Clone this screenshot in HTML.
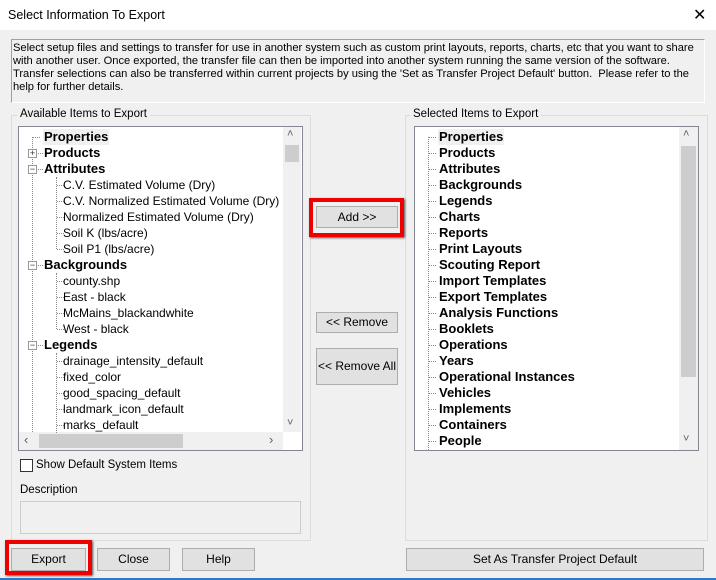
<!DOCTYPE html>
<html><head><style>
*{margin:0;padding:0;box-sizing:border-box}
body{width:716px;height:580px;background:#f0f0f0;font-family:"Liberation Sans",sans-serif;font-size:12px;color:#000;position:relative;overflow:hidden}
.a{position:absolute}
.btn{position:absolute;background:#e1e1e1;border:1px solid #adadad;text-align:center;font-size:12px}
.tree{position:absolute;background:#fff;border:1px solid #828790;overflow:hidden}
.it{position:absolute;white-space:nowrap;line-height:16px}
.b{font-weight:bold;font-size:13px}
.dh{position:absolute;border-top:1px dotted #888;width:7px;height:0}
.dv{position:absolute;border-left:1px dotted #888;width:0}
.pm{position:absolute;width:9px;height:9px;border:1px solid #999;background:#fff;font-size:9px;line-height:7px;text-align:center;color:#333}
.grp{position:absolute;border:1px solid #dcdcdc}
.sb{position:absolute;background:#f0f0f0}
</style></head><body>
<div class="a" style="left:0;top:0;width:716px;height:30px;background:#fff"></div>
<div class="a" style="left:8px;top:8px;font-size:12.5px">Select Information To Export</div>
<div class="a" style="left:693px;top:5px;font-size:16px">✕</div>
<div class="a" style="left:11px;top:39px;width:694px;height:64px;border:1px solid #a0a0a0;border-right-color:#fff;border-bottom-color:#fff;padding:2px 0 0 1px;font-size:11.15px;line-height:13px;letter-spacing:-0.02px">Select setup files and settings to transfer for use in another system such as custom print layouts, reports, charts, etc that you want to share with another user. Once exported, the transfer file can then be imported into another system running the same version of the software. Transfer selections can also be transferred within current projects by using the 'Set as Transfer Project Default' button.&nbsp; Please refer to the help for further details.</div>

<div class="grp" style="left:11px;top:115px;width:300px;height:426px"></div>
<div class="a" style="left:17px;top:108px;background:#f0f0f0;padding:0 3px;font-size:11.5px">Available Items to Export</div>
<div class="grp" style="left:405px;top:115px;width:303px;height:426px"></div>
<div class="a" style="left:410px;top:108px;background:#f0f0f0;padding:0 3px;font-size:11.5px">Selected Items to Export</div>

<div class="tree" style="left:18px;top:126px;width:285px;height:325px">
<div class="sb" style="left:264px;top:0;width:18px;height:305px"></div>
<div class="a" style="left:266px;top:18px;width:14px;height:17px;background:#cdcdcd"></div>
<div class="a" style="left:268px;top:1px;font-size:11px;color:#606060">˄</div>
<div class="a" style="left:268px;top:290px;font-size:11px;color:#606060">˅</div>
<div class="sb" style="left:0;top:305px;width:264px;height:18px"></div>
<div class="a" style="left:20px;top:307px;width:144px;height:14px;background:#cdcdcd"></div>
<div class="a" style="left:5px;top:305px;font-size:13px;color:#606060">‹</div>
<div class="a" style="left:250px;top:305px;font-size:13px;color:#606060">›</div>
<div class="dv" style="left:13px;top:10px;height:295px"></div>
<div class="dv" style="left:37px;top:50px;height:72px"></div>
<div class="dv" style="left:37px;top:146px;height:56px"></div>
<div class="dv" style="left:37px;top:226px;height:80px"></div>
<div class="dh" style="left:14px;top:10px"></div>
<div class="dh" style="left:19px;top:26px;width:5px"></div>
<div class="dh" style="left:19px;top:42px;width:5px"></div>
<div class="dh" style="left:19px;top:138px;width:5px"></div>
<div class="dh" style="left:19px;top:218px;width:5px"></div>
<div class="dh" style="left:38px;top:58px"></div><div class="dh" style="left:38px;top:74px"></div><div class="dh" style="left:38px;top:90px"></div><div class="dh" style="left:38px;top:106px"></div><div class="dh" style="left:38px;top:122px"></div>
<div class="dh" style="left:38px;top:154px"></div><div class="dh" style="left:38px;top:170px"></div><div class="dh" style="left:38px;top:186px"></div><div class="dh" style="left:38px;top:202px"></div>
<div class="dh" style="left:38px;top:234px"></div><div class="dh" style="left:38px;top:250px"></div><div class="dh" style="left:38px;top:266px"></div><div class="dh" style="left:38px;top:282px"></div><div class="dh" style="left:38px;top:298px"></div>
<div class="pm" style="left:9px;top:22px">+</div>
<div class="pm" style="left:9px;top:38px">−</div>
<div class="pm" style="left:9px;top:134px">−</div>
<div class="pm" style="left:9px;top:214px">−</div>
<div class="it b" style="left:24px;top:2px;background:#f0f0f0;padding:0 1px">Properties</div>
<div class="it b" style="left:25px;top:18px">Products</div>
<div class="it b" style="left:25px;top:34px">Attributes</div>
<div class="it" style="left:44px;top:50px">C.V. Estimated Volume (Dry)</div>
<div class="it" style="left:44px;top:66px">C.V. Normalized Estimated Volume (Dry)</div>
<div class="it" style="left:44px;top:82px">Normalized Estimated Volume (Dry)</div>
<div class="it" style="left:44px;top:98px">Soil K (lbs/acre)</div>
<div class="it" style="left:44px;top:114px">Soil P1 (lbs/acre)</div>
<div class="it b" style="left:25px;top:130px">Backgrounds</div>
<div class="it" style="left:44px;top:146px">county.shp</div>
<div class="it" style="left:44px;top:162px">East - black</div>
<div class="it" style="left:44px;top:178px">McMains_blackandwhite</div>
<div class="it" style="left:44px;top:194px">West - black</div>
<div class="it b" style="left:25px;top:210px">Legends</div>
<div class="it" style="left:44px;top:226px">drainage_intensity_default</div>
<div class="it" style="left:44px;top:242px">fixed_color</div>
<div class="it" style="left:44px;top:258px">good_spacing_default</div>
<div class="it" style="left:44px;top:274px">landmark_icon_default</div>
<div class="it" style="left:44px;top:290px">marks_default</div>
</div>

<div class="a" style="left:309px;top:198px;width:95px;height:39px;border:4px solid #e00;box-shadow:1px 1px 2px #555"></div>
<div class="btn" style="left:316px;top:206px;width:82px;height:22px;line-height:20px">Add &gt;&gt;</div>
<div class="btn" style="left:316px;top:312px;width:82px;height:21px;line-height:19px">&lt;&lt; Remove</div>
<div class="btn" style="left:316px;top:348px;width:82px;height:37px;line-height:35px">&lt;&lt; Remove All</div>

<div class="tree" style="left:414px;top:126px;width:285px;height:325px">
<div class="sb" style="left:264px;top:0;width:19px;height:323px"></div>
<div class="a" style="left:266px;top:19px;width:15px;height:231px;background:#cdcdcd"></div>
<div class="a" style="left:268px;top:1px;font-size:11px;color:#606060">˄</div>
<div class="a" style="left:268px;top:306px;font-size:11px;color:#606060">˅</div>
<div class="dv" style="left:13px;top:10px;height:315px"></div>
<div class="a" style="left:14px;top:10px;width:7px;height:320px;background:repeating-linear-gradient(to bottom,#888 0,#888 1px,transparent 1px,transparent 16px);-webkit-mask:repeating-linear-gradient(to right,#000 0,#000 1px,transparent 1px,transparent 2px);mask:repeating-linear-gradient(to right,#000 0,#000 1px,transparent 1px,transparent 2px)"></div>
<div class="it b" style="left:23px;top:2px;background:#f0f0f0;padding:0 1px">Properties</div>
<div class="it b" style="left:24px;top:18px;line-height:16px">Products<br>Attributes<br>Backgrounds<br>Legends<br>Charts<br>Reports<br>Print Layouts<br>Scouting Report<br>Import Templates<br>Export Templates<br>Analysis Functions<br>Booklets<br>Operations<br>Years<br>Operational Instances<br>Vehicles<br>Implements<br>Containers<br>People</div>
</div>

<div class="a" style="left:20px;top:459px;width:13px;height:13px;border:1px solid #333;background:#fff"></div>
<div class="a" style="left:36px;top:459px;font-size:11.5px">Show Default System Items</div>
<div class="a" style="left:20px;top:484px;font-size:11.5px">Description</div>
<div class="a" style="left:20px;top:501px;width:281px;height:33px;border:1px solid #ccc;background:#f0f0f0"></div>

<div class="a" style="left:5px;top:540px;width:87px;height:35px;border:4px solid #e00;box-shadow:1px 1px 2px #555"></div>
<div class="btn" style="left:11px;top:548px;width:75px;height:23px;line-height:21px">Export</div>
<div class="btn" style="left:97px;top:548px;width:73px;height:23px;line-height:21px">Close</div>
<div class="btn" style="left:182px;top:548px;width:73px;height:23px;line-height:21px">Help</div>
<div class="btn" style="left:406px;top:548px;width:298px;height:23px;line-height:21px">Set As Transfer Project Default</div>
<div class="a" style="left:0;top:578px;width:716px;height:2px;background:#2b79c2"></div>
</body></html>
